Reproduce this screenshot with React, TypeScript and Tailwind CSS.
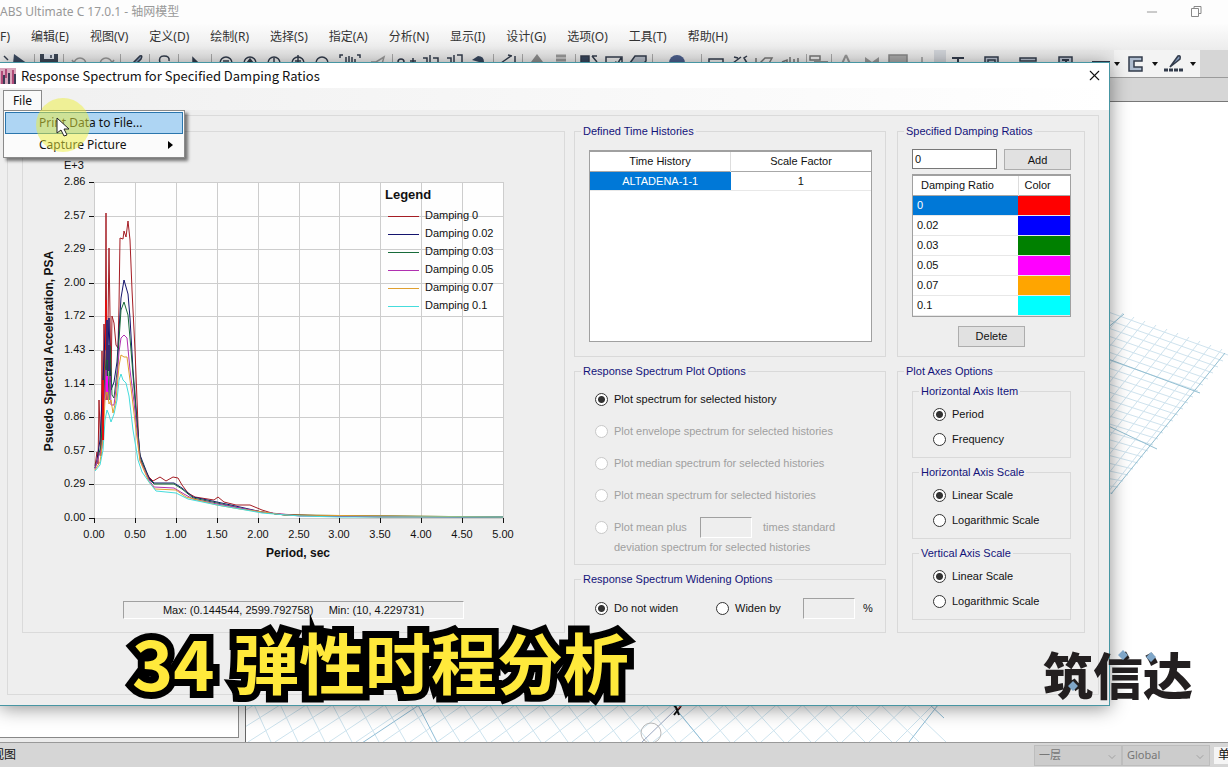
import type { ReactNode } from 'react';
import { ChevronDown, Minus, X } from 'lucide-react';

const menus = ['F)', '编辑(E)', '视图(V)', '定义(D)', '绘制(R)', '选择(S)', '指定(A)', '分析(N)', '显示(I)', '设计(G)', '选项(O)', '工具(T)', '帮助(H)'];

const ratios = [
  { value: '0', color: 'bg-[#ff0000]' },
  { value: '0.02', color: 'bg-[#0000ff]' },
  { value: '0.03', color: 'bg-[#008000]' },
  { value: '0.05', color: 'bg-[#ff00ff]' },
  { value: '0.07', color: 'bg-[#ffa500]' },
  { value: '0.1', color: 'bg-[#00ffff]' },
];

const yLabels = ['2.86', '2.57', '2.29', '2.00', '1.72', '1.43', '1.14', '0.86', '0.57', '0.29', '0.00'];
const yTicks = [182, 216, 249, 283, 316, 350, 384, 417, 451, 484, 518];
const xLabels = ['0.00', '0.50', '1.00', '1.50', '2.00', '2.50', '3.00', '3.50', '4.00', '4.50', '5.00'];
const xTicks = [94, 135, 176, 217, 258, 299, 339, 380, 421, 462, 503];

// drawn in order, so the lightly damped curves come first
const curves = [
  { name: 'Damping 0', color: '#a51d24', points: '95,466 97,452 98,464 99,400 101,456 102,351 103,432 104,324 105,400 106,213 107,400 109,248 111,382 112,316 114,323 116,345 118,348 119,305 120,238 123,239 124,231 126,237 128,221 130,240 132,290 135,350 137,400 139,450 142,464 149,477 153,481 160,477 166,481 173,477 178,478 182,485 188,493 195,497 214,500 218,497 224,502 236,505 250,505 262,510 275,514 330,516 380,517 503,517' },
  { name: 'Damping 0.02', color: '#14146e', points: '95,468 97,460 100,440 103,380 106,312 107,380 109,318 111,390 114,382 117,362 119,330 121,298 124,280 128,294 130,318 133,370 137,420 140,455 149,478 154,483 174,483 182,488 193,497 217,502 240,507 262,512 285,515 330,516 503,517' },
  { name: 'Damping 0.03', color: '#176b3a', points: '95,468 98,458 101,445 104,390 107,345 109,400 110,346 112,395 114,398 117,372 119,340 121,310 124,302 128,315 131,350 135,400 140,457 149,479 154,484 174,484 182,489 193,498 217,503 240,508 262,512 285,515 503,517' },
  { name: 'Damping 0.05', color: '#b030b0', points: '95,469 98,458 102,448 104,410 106,370 108,400 110,376 111,405 114,405 117,380 119,352 121,338 124,335 127,338 130,370 134,402 140,460 149,480 154,487 174,488 184,494 193,499 217,504 240,508 262,512 300,516 503,517' },
  { name: 'Damping 0.07', color: '#e0a030', points: '95,470 100,462 103,440 105,400 107,388 109,404 111,400 113,413 116,400 119,366 121,355 124,357 127,357 131,388 136,430 140,461 149,482 155,489 176,490 186,497 217,505 240,509 285,515 503,517' },
  { name: 'Damping 0.1', color: '#45dcdc', points: '95,471 100,465 103,450 105,420 107,410 109,415 111,422 114,414 117,400 119,380 121,374 123,380 126,383 129,396 133,430 138,460 142,472 149,482 156,491 176,493 188,499 217,505 240,509 262,513 300,516 340,517 503,517' },
];

function GroupBox({ title, className = '', inset = 'px-3.5', children }: { title: string; className?: string; inset?: string; children: ReactNode }) {
  return (
    <fieldset className={`min-w-0 border border-[#d9d9d9] ${className}`}>
      <legend className="ml-1.5 px-0.5 leading-4 text-[#13137a]">{title}</legend>
      <div className={inset}>{children}</div>
    </fieldset>
  );
}

function Radio({ name, label, checked, disabled }: { name: string; label: string; checked?: boolean; disabled?: boolean }) {
  return (
    <label className={`flex h-5 items-center gap-1.5 ${disabled ? 'text-[#a0a0a0]' : ''}`}>
      <input
        type="radio"
        name={name}
        defaultChecked={checked}
        disabled={disabled}
        className="size-[13px] shrink-0 appearance-none rounded-full border border-[#333] bg-white checked:bg-[radial-gradient(circle,#333_3px,#fff_4px)] disabled:border-[#c8c8c8]"
      />
      {label}
    </label>
  );
}

function Tool({ className = 'w-6', children }: { className?: string; children?: ReactNode }) {
  return (
    <span className={`flex h-6 shrink-0 justify-center ${className}`}>
      <svg width="22" height="22" viewBox="0 0 22 22" fill="none" stroke="#333c4c" strokeWidth="1.5" className="shrink-0">
        {children}
      </svg>
    </span>
  );
}

function Separator() {
  return <span className="mx-0.5 h-5 w-px shrink-0 bg-[#a8a8a8]" />;
}

function Caret() {
  return (
    <svg width="6" height="4" viewBox="0 0 6 4" className="mt-2 shrink-0">
      <path d="M0 0h6L3 4z" fill="#111" />
    </svg>
  );
}

function Toolbar() {
  return (
    <div className="flex h-7 items-start overflow-hidden border-b border-[#9b9b9b] bg-[#d6d6d6]">
      <div className="flex h-full shrink-0 items-start bg-linear-to-b from-[#e9e9e9] to-[#f4f4f4] pt-1">
        <Tool className="w-2"><path d="M11 2l4 4" /></Tool>
        <Tool><path d="M5 0l14 10H4z" fill="#3b4a60" stroke="none" /></Tool>
        <Separator />
        <Tool><path d="M2 0h18v18H2z" fill="#3c4656" stroke="none" /><path d="M6 0h10v5H6z" fill="#dfe4ec" stroke="none" /><path d="M13 1v3" /></Tool>
        <Separator />
        <Tool className="w-7"><path d="M5 10a6 6 0 0 1 12 0M3 6l3 4" stroke="#999" /></Tool>
        <Tool><path d="M5 10a6 6 0 0 1 12 0M19 6l-3 4" stroke="#999" /></Tool>
        <Separator />
        <Tool><path d="M5 13L16 2q3-1 1 3L9 13" fill="#8ba0bf" /></Tool>
        <Separator />
        <Tool><path d="M7 9Q5 2 11 2t5 5" /></Tool>
        <Separator />
        <Tool className="w-7"><path d="M9 4l6 6-6 6z" fill="#333c4c" /></Tool>
        <Separator />
        <Tool><circle cx="11" cy="9" r="6" /><path d="M8 7h6" /></Tool>
        <Tool><circle cx="11" cy="9" r="6" /><path d="M11 5l3 4H8z" fill="#333" /></Tool>
        <Tool><circle cx="11" cy="9" r="6" /><path d="M11 4v4" /></Tool>
        <Tool><circle cx="11" cy="9" r="6" /><path d="M11 1v8M8 7h6" /></Tool>
        <Tool><circle cx="11" cy="9" r="6" /></Tool>
        <Tool className="w-8"><path d="M1 4V1h3M18 1h3v3M7 9V3M10 9V2M13 9V3M16 9V5" /></Tool>
        <Tool><path d="M4 8h5l8-5-2 7" stroke="#999" /></Tool>
        <Separator />
        <Tool className="w-3"><circle cx="11" cy="8" r="3" /></Tool>
        <Tool className="w-3"><path d="M11 4v8M8 7h6" /></Tool>
        <Tool><path d="M3 4h4v5M10 1v9M13 4h5v5" /></Tool>
        <Tool><path d="M3 4h4v5M10 1v9M13 1h5v8" /></Tool>
        <Tool><path d="M4 6l6-4q6 0 6 6h-5z" fill="#38475e" stroke="none" /></Tool>
        <Separator />
        <Tool><path d="M4 9L14 2M18 2v8M11 1l4 1" /></Tool>
        <Separator />
        <Tool><path d="M11 0l6 8H5z" fill="#8e8e8e" stroke="none" /></Tool>
        <Tool><path d="M6 2h10M6 6h10" stroke="#999" strokeWidth="3" /></Tool>
        <Separator />
        <Tool><path d="M2 2h8v8H2z" fill="#38475e" /><path d="M13 2h5M13 2l5 6" /></Tool>
        <Tool><path d="M3 3h16v8H3zM12 8l3 1 3-5" /></Tool>
        <Tool><path d="M3 9l5-7h11v5l-4 4" fill="#b6bdc8" /></Tool>
        <Separator />
        <Tool className="w-11"><circle cx="11" cy="9" r="8" fill="#4c5f8d" stroke="none" /></Tool>
        <Separator />
        <Tool><path d="M4 5h14v8H4z" /></Tool>
        <Tool><path d="M4 9l8-6M5 3l4 1M18 9l-3-5 3-2" /></Tool>
        <Tool><path d="M3 4v8M6 10l6-6h7l-4 7" stroke="#777" /></Tool>
        <Tool className="w-7"><path d="M3 8l5-2v5M11 3v8M15 5v6M19 4v8" stroke="#777" /></Tool>
        <Separator />
        <Tool className="w-5"><path d="M2 2h10v4H2zM6 8h14" stroke="#777" /></Tool>
        <Separator />
        <Tool><path d="M11 1L6 12M11 1l5 11" stroke="#999" strokeWidth="2" /></Tool>
        <Tool className="w-7"><path d="M4 3l7 5 7-5v8H4z" fill="#999" stroke="none" /></Tool>
        <Tool><path d="M2 1h18v14H2z" fill="#aaa" stroke="#888" /></Tool>
        <Tool><path d="M11 3v8" stroke="#999" /></Tool>
        <span className="-mt-1 h-full w-3 bg-[#d0d3d8]" />
        <Tool><path d="M5 4h12M11 4v12" strokeWidth="2" /></Tool>
        <Tool className="w-11"><path d="M4 3h13v12H4zM7 6h7v6H7z" fill="#b8c0cf" /></Tool>
        <Tool className="w-7"><path d="M3 4h16v3H3z" fill="#b8c0cf" /></Tool>
        <Tool className="w-12"><path d="M4 3h13v12H4z" fill="#b8c0cf" /><path d="M7 6h7M11 6v7" strokeWidth="2" /></Tool>
        <Tool><path d="M1 8h18" strokeWidth="2" /></Tool>
      </div>
      <div className="flex h-full shrink-0 items-start gap-1 bg-[#f3f3f3] pt-1 pr-1">
        <Caret />
        <Tool><path d="M4 3h13v4H9v6h8v4H4z" fill="#aebccf" /></Tool>
        <Caret />
        <Tool><path d="M1 16h20" strokeWidth="3" strokeDasharray="4 1" /><path d="M7 13L15 2q3-1 2 3z" fill="#8399ba" /></Tool>
        <Caret />
      </div>
    </div>
  );
}

function ModelView() {
  const rows = Array.from({ length: 25 }, (_, i) => i);
  const columns = Array.from({ length: 10 }, (_, i) => i);
  const lattice = Array.from({ length: 27 }, (_, i) => i);
  return (
    <svg viewBox="246 102 982 640" preserveAspectRatio="xMaxYMax slice" className="size-full" fill="none" aria-hidden="true">
      <g stroke="#cfe3ee">
        {rows.map((i) => (
          <path key={i} d={`M1100 ${309 + i * 8}L${1228 - i * 5} ${355 + i * 6}`} />
        ))}
        {columns.map((i) => (
          <path key={i} d={`M${1123 + i * 11} ${313 + i * 4}L1100 ${340 + i * 18}`} />
        ))}
      </g>
      <path d="M1225 353L1111 494M1100 356l100 37M1100 422l57 27M1124 314l-24 20" stroke="#93bfd2" />
      <g stroke="#cde3ee">
        {lattice.map((i) => (
          <path key={i} d={`M${226 + i * 26} 700l${18 + i} 42M${262 + i * 26} 700l${-68 + i} 42`} />
        ))}
      </g>
      <path d="M417 703l20 39M422 703l-60 40M938 705l-29 37M928 703l16 15M676 709l27 33" stroke="#8fbdd6" />
      <path d="M676 709l-36 35" stroke="#9ba7c0" />
      <circle cx="651" cy="733" r="10" stroke="#bbb" />
      <path d="M675 705l4 10M681 706l-7 9M677 709l-3-4" stroke="#111" strokeWidth="2" />
      <path d="M678 709l4-4" stroke="#c33" />
    </svg>
  );
}

function SpectrumChart() {
  return (
    <svg viewBox="23 150 541 430" className="w-full font-['Liberation_Sans',sans-serif] text-[11px]" fill="#111">
      <path d="M94 182h409v336H94z" fill="#fefefe" />
      <g stroke="#cdcdcd" shapeRendering="crispEdges">
        {yTicks.map((y) => <path key={y} d={`M94 ${y}h409`} />)}
        {xTicks.map((x) => <path key={x} d={`M${x} 182v336`} />)}
      </g>
      <g stroke="#111" shapeRendering="crispEdges">
        {yTicks.map((y) => <path key={y} d={`M89 ${y}h5`} />)}
        {xTicks.map((x) => <path key={x} d={`M${x} 518v5`} />)}
      </g>
      <text x="64" y="169">E+3</text>
      {yLabels.map((label, i) => <text key={label} x="64" y={yTicks[i] + 3}>{label}</text>)}
      {xLabels.map((label, i) => <text key={label} x={xTicks[i]} y="538" textAnchor="middle">{label}</text>)}
      {curves.map((c) => <polyline key={c.name} points={c.points} fill="none" stroke={c.color} />)}
      <path d="M103 380v60M106 300v50" stroke="#e01010" strokeWidth="2" />
      <path d="M107 320v40M109 345v26" stroke="#3a2a70" strokeWidth="2" />
      <path d="M107 376v16" stroke="#f0f" strokeWidth="2" />
      <text x="385" y="199" className="text-[13px] font-bold">Legend</text>
      {curves.map((c, i) => (
        <g key={c.name}>
          <path d={`M388 ${216.5 + i * 18}h31`} stroke={c.color} />
          <text x="425" y={219 + i * 18}>{c.name}</text>
        </g>
      ))}
      <text x="298" y="557" textAnchor="middle" className="text-[12px] font-bold">Period, sec</text>
      <text transform="translate(53 351) rotate(-90)" textAnchor="middle" className="text-[12px] font-bold">Psuedo Spectral Acceleration, PSA</text>
    </svg>
  );
}

function FileMenu() {
  return (
    <div className="relative flex h-[22px] items-end bg-linear-to-r from-[#f0f0f0] to-white pl-[3px] font-['Noto_Sans','Noto_Sans_CJK_SC',sans-serif] text-[12px]">
      <button className="z-20 h-5 w-[39px] border border-b-0 border-[#8a8a8a] bg-[#fafafa]">File</button>
      <div className="absolute top-[22px] left-[3px] z-10 w-[182px] border border-[#8a8a8a] bg-[#fbfbfb] p-px shadow-[3px_3px_3px_rgba(0,0,0,0.5)]">
        <button className="block h-[22px] w-full border border-[#2b76ad] bg-[#aed5f3] pl-[33px] text-left">Print Data to File...</button>
        <button className="flex h-[22px] w-full items-center justify-between pr-2.5 pl-[34px]">
          Capture Picture
          <svg width="5" height="8" viewBox="0 0 5 8"><path d="M0 0v8l5-4z" /></svg>
        </button>
        <div className="absolute top-[-13px] left-8 size-[54px] rounded-full bg-[#eef03c]/50" />
        <svg width="14" height="20" viewBox="0 0 14 20" className="absolute top-1.5 left-[52px]">
          <path d="M1 1v15l4-3 3 6 3-1-3-6h5z" fill="#fff" stroke="#222" />
        </svg>
      </div>
    </div>
  );
}

function DampingRatios() {
  return (
    <GroupBox title="Specified Damping Ratios" className="h-[234px]" inset="pl-3.5 pr-[13px]">
      <div className="mt-2.5 flex gap-[7px]">
        <input aria-label="Damping ratio" defaultValue="0" className="h-5 w-0 flex-1 border border-[#777] bg-white px-0.5" />
        <button className="h-[21px] w-[67px] border border-[#adadad] bg-[#e1e1e1]">Add</button>
      </div>
      <div className="mt-1 border border-t-2 border-[#a0a0a0] bg-white">
        <table className="w-full border-collapse">
          <thead>
            <tr className="h-[19px] border-b border-[#a8a8a8]">
              <th className="border-r border-[#ddd] pl-2 text-left font-normal">Damping Ratio</th>
              <th className="w-[52px] pl-1.5 text-left font-normal">Color</th>
            </tr>
          </thead>
          <tbody>
            {ratios.map((r, i) => (
              <tr key={r.value} className="h-5 border-b border-[#e8e8e8]">
                <td className={`pl-1 ${i === 0 ? 'bg-[#0078d7] text-white' : ''}`}>{r.value}</td>
                <td className={r.color} />
              </tr>
            ))}
          </tbody>
        </table>
      </div>
      <button className="mx-auto mt-[9px] block h-[21px] w-[67px] border border-[#adadad] bg-[#e1e1e1]">Delete</button>
    </GroupBox>
  );
}

function AxisGroup({ title, name, options }: { title: string; name: string; options: string[] }) {
  return (
    <GroupBox title={title} className="h-[75px]" inset="pl-5">
      <div className="mt-[5px] flex flex-col gap-[5px]">
        {options.map((o, i) => <Radio key={o} name={name} label={o} checked={i === 0} />)}
      </div>
    </GroupBox>
  );
}

function SpectrumDialog() {
  return (
    <section className="absolute top-[62px] right-[118px] left-0 border border-l-0 border-[#4796a3] bg-[#eee] font-['Liberation_Sans',sans-serif] text-[11px] leading-4 text-[#111] shadow-[0_2px_18px_rgba(0,0,0,0.45)]">
      <header className="flex h-[25px] items-center bg-white font-['Noto_Sans_CJK_SC',sans-serif] text-[13px]">
        <svg width="16" height="16" viewBox="0 0 16 16">
          <path d="M0 0h16v16H0z" fill="#d9a8bd" />
          <path d="M2 3v13M6 1v9M13 2v14" stroke="#b04a78" strokeWidth="2" />
          <path d="M4 7v9M9 5v11M15 6v10" stroke="#3b3b55" strokeWidth="2" />
        </svg>
        <h1 className="ml-[5px] flex-1">Response Spectrum for Specified Damping Ratios</h1>
        <button aria-label="Close" className="mr-1.5"><X size={17} strokeWidth={1.5} /></button>
      </header>
      <FileMenu />
      <div className="mt-[5px] mr-2.5 mb-2.5 ml-[7px] flex border border-[#dadada] pt-[7px] pr-[13px] pb-[61px] pl-3.5">
        <div className="mt-2 flex min-w-0 flex-1 flex-col border border-[#dadada] pt-[18px]">
          <SpectrumChart />
          <output className="mx-[100px] mt-[21px] border border-[#a0a0a0] border-r-white border-b-white text-center whitespace-pre">
            {'Max: (0.144544, 2599.792758)     Min: (10, 4.229731)'}
          </output>
        </div>
        <div className="ml-[9px] flex w-[312px] flex-col gap-1.5">
          <GroupBox title="Defined Time Histories" className="h-[234px]" inset="pl-3.5 pr-[13px]">
            <div className="mt-[11px] h-[192px] border border-t-2 border-[#a0a0a0] bg-white">
              <table className="w-full border-collapse text-center">
                <thead>
                  <tr className="h-[19px] border-b border-[#a8a8a8]">
                    <th className="w-1/2 border-r border-[#ddd] font-normal">Time History</th>
                    <th className="font-normal">Scale Factor</th>
                  </tr>
                </thead>
                <tbody>
                  <tr className="h-[19px] border-b border-[#e8e8e8]">
                    <td className="bg-[#0078d7] text-white">ALTADENA-1-1</td>
                    <td>1</td>
                  </tr>
                </tbody>
              </table>
            </div>
          </GroupBox>
          <GroupBox title="Response Spectrum Plot Options" className="h-[202px]" inset="pl-5">
            <div className="mt-2.5 flex flex-col gap-3">
              <Radio name="plot" label="Plot spectrum for selected history" checked />
              <Radio name="plot" label="Plot envelope spectrum for selected histories" disabled />
              <Radio name="plot" label="Plot median spectrum for selected histories" disabled />
              <Radio name="plot" label="Plot mean spectrum for selected histories" disabled />
              <div className="flex h-5 items-center text-[#a0a0a0]">
                <div className="w-[105px]"><Radio name="plot" label="Plot mean plus" disabled /></div>
                <input aria-label="Standard deviations" disabled className="mr-[11px] h-[21px] w-[52px] border border-[#a0a0a0] border-r-white border-b-white" />
                times standard
              </div>
            </div>
            <p className="mt-0.5 ml-[19px] text-[#a0a0a0]">deviation spectrum for selected histories</p>
          </GroupBox>
          <GroupBox title="Response Spectrum Widening Options" className="h-[62px]" inset="pl-5">
            <div className="mt-[11px] flex h-5 items-center">
              <div className="w-[121px]"><Radio name="widen" label="Do not widen" checked /></div>
              <div className="w-[87px]"><Radio name="widen" label="Widen by" /></div>
              <input aria-label="Widen by percent" disabled className="mr-2 h-[21px] w-[52px] border border-[#a0a0a0] border-r-white border-b-white" />
              %
            </div>
          </GroupBox>
        </div>
        <div className="ml-[11px] flex w-[188px] flex-col gap-1.5">
          <DampingRatios />
          <GroupBox title="Plot Axes Options" className="flex-1" inset="pl-3.5 pr-[13px]">
            <div className="mt-1 flex flex-col gap-1.5">
              <AxisGroup title="Horizontal Axis Item" name="item" options={['Period', 'Frequency']} />
              <AxisGroup title="Horizontal Axis Scale" name="hscale" options={['Linear Scale', 'Logarithmic Scale']} />
              <AxisGroup title="Vertical Axis Scale" name="vscale" options={['Linear Scale', 'Logarithmic Scale']} />
            </div>
          </GroupBox>
        </div>
      </div>
    </section>
  );
}

function StatusSelect({ label, value }: { label: string; value: string }) {
  return (
    <div className="relative">
      <select aria-label={label} disabled className="h-[21px] w-[88px] appearance-none border border-[#bdbdbd] bg-[#ccc] pl-1 text-[11px] text-[#777]">
        <option>{value}</option>
      </select>
      <ChevronDown size={12} strokeWidth={1} className="absolute top-1.5 right-1 text-[#777]" />
    </div>
  );
}

function Caption() {
  return (
    <svg
      width="530"
      height="120"
      viewBox="0 0 530 120"
      className="absolute bottom-[54px] left-[120px] z-10 font-['Noto_Sans_CJK_SC',sans-serif] font-bold [paint-order:stroke_fill]"
      fill="#ffe93b"
      stroke="#000"
      strokeWidth="14"
      strokeMiterlimit="14"
    >
      <text x="12" y="98" className="text-[70px]">34</text>
      <text x="113" y="96" className="text-[66px]">弹性时程分析</text>
    </svg>
  );
}

function Logo() {
  return (
    <div className="absolute right-[35px] bottom-[66px] font-['Noto_Sans_CJK_SC',sans-serif] text-[50px] leading-[56px] font-black text-[#231f20]">
      筑信达
      <svg viewBox="0 0 150 56" className="absolute inset-0 size-full" fill="#7fa6c8">
        <path d="M80 5l5 5-5 5-5-5zM108 7l5 5-5 5-5-5zM30 36l5 5-5 5-5-5z" />
      </svg>
    </div>
  );
}

export default function App() {
  return (
    <div className="relative flex min-h-screen flex-col overflow-hidden bg-white font-['Noto_Sans','Noto_Sans_CJK_SC',sans-serif] text-[12px] text-[#333]">
      <header className="flex h-[23px] items-center bg-[#fdfdfd] text-[#999]">
        <div className="flex-1">ABS Ultimate C 17.0.1 - 轴网模型</div>
        <button aria-label="Minimize" className="mr-[31px] text-[#666]"><Minus size={16} strokeWidth={1} /></button>
        <button aria-label="Restore" className="mr-[26px]">
          <svg width="11" height="11" viewBox="0 0 11 11" fill="none" stroke="#888"><path d="M3 2.5V.5h7v7H8M.5 2.5h7v8h-7z" /></svg>
        </button>
      </header>
      <nav className="flex h-[27px] items-center gap-[21px] bg-linear-to-b from-[#fdfdfd] to-[#ececec]">
        {menus.map((m) => <button key={m} className="whitespace-nowrap">{m}</button>)}
      </nav>
      <Toolbar />
      <div className="h-6 border-b border-[#777] bg-[#d6d6d6]" />
      <main className="flex min-h-0 flex-1">
        <div className="w-[246px] border-r border-[#666] bg-[#ececec] pr-1.5 pb-1">
          <div className="h-full border-r border-b border-[#888] bg-white" />
        </div>
        <div className="relative min-w-0 flex-1">
          <div className="absolute inset-0"><ModelView /></div>
        </div>
      </main>
      <footer className="flex h-[25px] items-center border-t border-[#999] bg-[#d6d6d6]">
        <span className="-ml-2 flex-1 text-[#111]">视图</span>
        <StatusSelect label="楼层" value="一层" />
        <StatusSelect label="坐标系" value="Global" />
        <button className="ml-1 h-[17px] w-3.5 overflow-hidden bg-[#f5f5f5] pl-1 leading-4 text-[#111]">单</button>
      </footer>

      <SpectrumDialog />
      <Caption />
      <Logo />
    </div>
  );
}
